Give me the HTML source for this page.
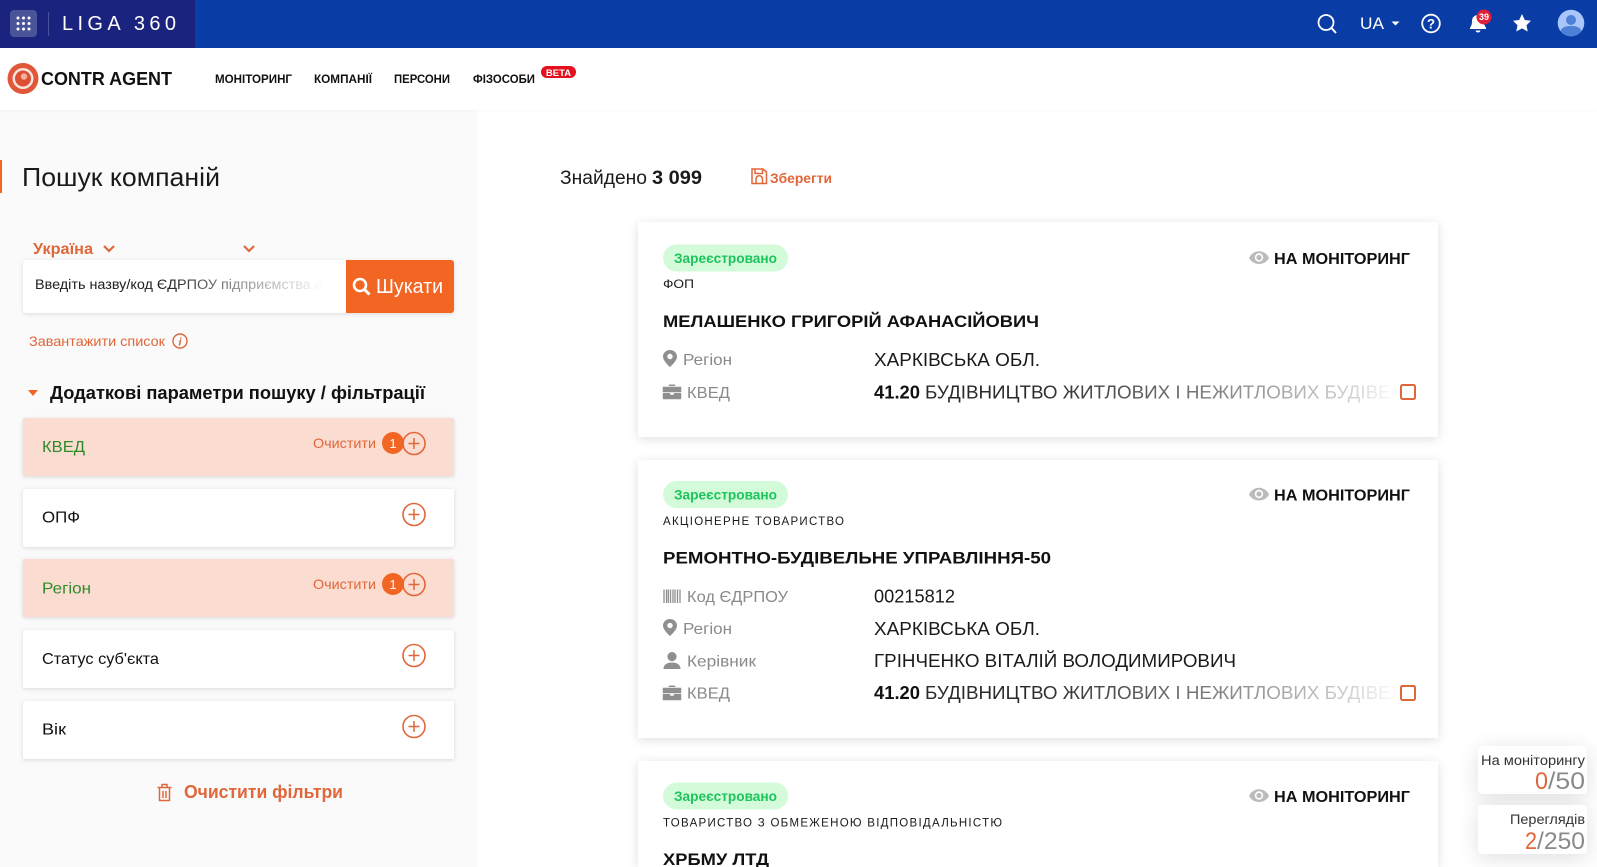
<!DOCTYPE html>
<html lang="uk"><head><meta charset="utf-8"><title>Contr Agent</title>
<style>
html,body{margin:0;padding:0;width:1597px;height:867px;overflow:hidden;background:#fff}
body{position:relative}
.b{position:absolute;box-sizing:border-box}
.card{left:638px;width:800px;background:#fff;box-shadow:0 2px 10px rgba(0,0,0,.13)}
.f{left:22.500px;width:431.500px;height:58px;border-radius:2px;background:#fff;box-shadow:0 1px 4px rgba(0,0,0,.14)}
.p{background:#fbdcd0}
.w{left:1478px;width:109px;background:#fff;border-radius:4px;box-shadow:0 4px 22px rgba(0,0,0,.13)}
svg{position:absolute;left:0;top:0}
text{font-family:"Liberation Sans","DejaVu Sans",sans-serif;fill:#1a1a1a}
.o{fill:#e0673a}
.g{fill:#8a8a8a}
.sb{font-weight:700}
</style></head><body>
<div class="b" style="left:0;top:110px;width:478px;height:757px;background:#fafafa"></div>
<div class="b" style="left:0;top:48px;width:1597px;height:62px;background:#fff;box-shadow:0 1px 2px rgba(0,0,0,.03)"></div>
<div class="b" style="left:0;top:0;width:1597px;height:48px;background:#0a3ca5"></div>
<div class="b" style="left:0;top:0;width:195px;height:48px;background:#1a237e"></div>
<div class="b" style="left:10px;top:10px;width:27px;height:27px;border-radius:4px;background:#4a5499"></div>
<div class="b" style="left:48px;top:12px;width:1px;height:24px;background:#4a5499"></div>
<div class="b" style="left:0;top:160px;width:2px;height:33px;background:#f26522"></div>
<div class="b" style="left:22.500px;top:260px;width:431.500px;height:53px;background:#fff;border-radius:3px;box-shadow:0 1px 4px rgba(0,0,0,.13)"></div>
<div class="b" style="left:346px;top:260px;width:108px;height:53px;background:#f26522;border-radius:0 3px 3px 0"></div>
<div class="b f p" style="top:418px"></div>
<div class="b f" style="top:489px"></div>
<div class="b f p" style="top:559px"></div>
<div class="b f" style="top:630px"></div>
<div class="b f" style="top:700.500px"></div>
<div class="b card" style="top:222px;height:215px"></div>
<div class="b card" style="top:459.500px;height:278px"></div>
<div class="b card" style="top:761px;height:106px"></div>
<div class="b w" style="top:746px;height:48px"></div>
<div class="b w" style="top:805px;height:49px"></div>

<svg width="1597" height="867" viewBox="0 0 1597 867" xmlns="http://www.w3.org/2000/svg">
<defs>
<linearGradient id="fd" gradientUnits="userSpaceOnUse" x1="1030" y1="0" x2="1400" y2="0"><stop offset="0" stop-color="#2a2a2a"/><stop offset=".45" stop-color="#777"/><stop offset=".85" stop-color="#ccc"/><stop offset="1" stop-color="#fff"/></linearGradient>
<linearGradient id="ph" gradientUnits="userSpaceOnUse" x1="165" y1="0" x2="325" y2="0"><stop offset="0" stop-color="#222"/><stop offset=".5" stop-color="#999"/><stop offset=".85" stop-color="#ddd"/><stop offset="1" stop-color="#fff"/></linearGradient>
<g id="plus"><circle r="11" fill="none" stroke="#e0673a" stroke-width="1.600"/><path d="M-5.500 0H5.500M0-5.500V5.500" stroke="#e0673a" stroke-width="1.500"/></g>
<g id="eye"><path d="M0 8C4-1 16-1 20 8C16 16 4 16 0 8Z" fill="#bbb"/><circle cx="10" cy="7.500" r="4.200" fill="#fff"/><circle cx="10" cy="7.500" r="2.600" fill="#bbb"/></g>
<path id="pin" d="M7 0C3 0 0 3 0 6.600C0 11 7 17 7 17S14 11 14 6.600C14 3 11 0 7 0ZM7 9.200A2.700 2.700 0 1 1 7 3.800A2.700 2.700 0 0 1 7 9.200Z" fill="#8f8f8f" fill-rule="evenodd"/>
<g id="case"><path d="M6 2V0.800H12V2M0 3H18V8H0ZM0 9.300H7V11H11V9.300H18V15H0Z" fill="#8f8f8f" stroke="#8f8f8f" stroke-width=".5"/></g>
</defs>

<!-- top bar -->
<g fill="#fff"><circle cx="18" cy="18" r="1.500"/><circle cx="23.500" cy="18" r="1.500"/><circle cx="29" cy="18" r="1.500"/><circle cx="18" cy="23.500" r="1.500"/><circle cx="23.500" cy="23.500" r="1.500"/><circle cx="29" cy="23.500" r="1.500"/><circle cx="18" cy="29" r="1.500"/><circle cx="23.500" cy="29" r="1.500"/><circle cx="29" cy="29" r="1.500"/></g>
<text x="62" y="30" font-size="20" textLength="114" lengthAdjust="spacing" style="fill:#fff">LIGA 360</text>
<circle cx="1326" cy="22.500" r="7.500" fill="none" stroke="#fff" stroke-width="1.800"/><path d="M1331.500 28L1336 33" stroke="#fff" stroke-width="2"/>
<text x="1360" y="29" font-size="16.500" textLength="24" lengthAdjust="spacingAndGlyphs" style="fill:#fff">UA</text>
<path d="M1391.500 21.500H1399.500L1395.500 25.500Z" fill="#fff"/>
<circle cx="1431" cy="23.500" r="8.800" fill="none" stroke="#fff" stroke-width="1.800"/>
<text x="1431" y="28.500" font-size="13.500" text-anchor="middle" font-weight="700" style="fill:#fff">?</text>
<path d="M1478 15C1474 15 1472 18 1472 21C1472 25 1471 26 1470 28V29H1486V28C1485 26 1484 25 1484 21C1484 18 1482 15 1478 15ZM1475.500 30.500C1476 32 1477 32.500 1478 32.500S1480 32 1480.500 30.500Z" fill="#fff"/>
<circle cx="1484" cy="17" r="7.500" fill="#e01e37"/>
<text x="1484" y="20" font-size="9" text-anchor="middle" font-weight="700" style="fill:#fff">39</text>
<path d="M1522 14L1524.800 20L1531 20.800L1526.500 25.200L1527.700 31.500L1522 28.400L1516.300 31.500L1517.500 25.200L1513 20.800L1519.200 20Z" fill="#fff"/>
<circle cx="1571" cy="23" r="13.300" fill="#a8c6fa"/><circle cx="1571" cy="20" r="5" fill="#4e80d8"/><path d="M1560.500 31C1562 27 1566 26 1571 26S1580 27 1581.500 31C1579 34.500 1575 36.300 1571 36.300S1563 34.500 1560.500 31Z" fill="#4e80d8"/>

<!-- nav -->
<circle cx="23" cy="78.500" r="15.500" fill="#e0573a"/><circle cx="23" cy="78.500" r="10.500" fill="#f9e3dc"/><circle cx="23" cy="78.500" r="8" fill="#dc4f33"/><circle cx="24" cy="76.500" r="3.200" fill="#f3b09c"/>
<text x="41" y="85" font-size="18.500" font-weight="700" textLength="131" lengthAdjust="spacingAndGlyphs" style="fill:#111">CONTR AGENT</text>
<text x="215" y="83" textLength="77" lengthAdjust="spacingAndGlyphs" font-size="12" font-weight="700" style="fill:#111">МОНІТОРИНГ</text>
<text x="314" y="83" textLength="58" lengthAdjust="spacingAndGlyphs" font-size="12" font-weight="700" style="fill:#111">КОМПАНІЇ</text>
<text x="394" y="83" textLength="56" lengthAdjust="spacingAndGlyphs" font-size="12" font-weight="700" style="fill:#111">ПЕРСОНИ</text>
<text x="473" y="83" textLength="62" lengthAdjust="spacingAndGlyphs" font-size="12" font-weight="700" style="fill:#111">ФІЗОСОБИ</text>
<rect x="541" y="66" width="35" height="12" rx="6" fill="#e3101e"/>
<text x="558.500" y="76" font-size="9.500" font-weight="700" text-anchor="middle" style="fill:#fff">BETA</text>

<!-- sidebar -->
<text x="22" y="186" font-size="26" textLength="198" lengthAdjust="spacingAndGlyphs">Пошук компаній</text>
<text x="33" y="254" class="o sb" font-size="16" textLength="60" lengthAdjust="spacingAndGlyphs">Україна</text>
<path d="M104 246L109 251L114 246M244 246L249 251L254 246" fill="none" stroke="#e0673a" stroke-width="2.200"/>
<text x="35" y="289" font-size="13.500" textLength="304" lengthAdjust="spacingAndGlyphs" style="fill:url(#ph)">Введіть назву/код ЄДРПОУ підприємства або</text>
<circle cx="360" cy="285" r="6" fill="none" stroke="#fff" stroke-width="2.600"/><path d="M364.500 289.500L369.500 294.500" stroke="#fff" stroke-width="3"/>
<text x="376" y="293" font-size="20" textLength="67" lengthAdjust="spacingAndGlyphs" style="fill:#fff">Шукати</text>
<text x="29" y="346" class="o" font-size="14" textLength="136" lengthAdjust="spacingAndGlyphs">Завантажити список</text>
<circle cx="180" cy="341" r="7" fill="none" stroke="#e0673a" stroke-width="1.400"/>
<text x="180" y="345.500" class="o" font-size="11" font-weight="700" font-style="italic" text-anchor="middle">i</text>
<path d="M28 390H38L33 396Z" fill="#f26522"/>
<text x="50" y="399" class="sb" font-size="18" textLength="375" lengthAdjust="spacingAndGlyphs" style="fill:#111">Додаткові параметри пошуку / фільтрації</text>

<text x="42" y="452" font-size="16" textLength="43" lengthAdjust="spacingAndGlyphs" style="fill:#2f8b2a">КВЕД</text>
<text x="313" y="448" class="o" font-size="14" textLength="63" lengthAdjust="spacingAndGlyphs">Очистити</text>
<circle cx="393" cy="443" r="11" fill="#f26522"/><text x="393" y="448" font-size="13" text-anchor="middle" style="fill:#fff">1</text>
<use href="#plus" x="414" y="443.500"/>

<text x="42" y="522.500" font-size="16" textLength="38" lengthAdjust="spacingAndGlyphs" style="fill:#111">ОПФ</text>
<use href="#plus" x="414" y="514.500"/>

<text x="42" y="593.500" font-size="16" textLength="49" lengthAdjust="spacingAndGlyphs" style="fill:#2f8b2a">Регіон</text>
<text x="313" y="589" class="o" font-size="14" textLength="63" lengthAdjust="spacingAndGlyphs">Очистити</text>
<circle cx="393" cy="584" r="11" fill="#f26522"/><text x="393" y="589" font-size="13" text-anchor="middle" style="fill:#fff">1</text>
<use href="#plus" x="414" y="584.500"/>

<text x="42" y="664" font-size="16" textLength="117" lengthAdjust="spacingAndGlyphs" style="fill:#111">Статус суб'єкта</text>
<use href="#plus" x="414" y="655.500"/>
<text x="42" y="734.500" font-size="16" textLength="24" lengthAdjust="spacingAndGlyphs" style="fill:#111">Вік</text>
<use href="#plus" x="414" y="726.500"/>

<path d="M157.500 787.500H171.500M162 787V784.500H167V787M159.500 788V800.500H169.500V788M163 791V798M166 791V798" fill="none" stroke="#e0673a" stroke-width="1.500"/>
<text x="184" y="798" class="o sb" font-size="18" textLength="159" lengthAdjust="spacingAndGlyphs">Очистити фільтри</text>

<!-- main header -->
<text x="560" y="184" font-size="19" textLength="87" lengthAdjust="spacingAndGlyphs">Знайдено</text>
<text x="652" y="184" font-size="19" font-weight="700" textLength="50" lengthAdjust="spacingAndGlyphs">3 099</text>
<path d="M752 169H763L766.500 172V183.500H752ZM755 169V173.500H762.500V169M756 183V179A3.200 3.200 0 0 1 762.500 179V183" fill="none" stroke="#e0673a" stroke-width="1.500"/>
<text x="770" y="183" class="o sb" font-size="13.500" textLength="62" lengthAdjust="spacingAndGlyphs">Зберегти</text>

<!-- card 1 -->
<rect x="663" y="244.500" width="125" height="27" rx="13.500" fill="#d3fbd9"/>
<text x="674" y="263" font-size="13.500" font-weight="700" textLength="103" lengthAdjust="spacingAndGlyphs" style="fill:#1cc45c">Зареєстровано</text>
<use href="#eye" x="1249" y="250"/>
<text x="1274" y="264" font-size="16" font-weight="700" textLength="136" lengthAdjust="spacingAndGlyphs" style="fill:#111">НА МОНІТОРИНГ</text>
<text x="663" y="288" font-size="11.500" textLength="31" lengthAdjust="spacingAndGlyphs">ФОП</text>
<text x="663" y="327" font-size="17" font-weight="700" textLength="376" lengthAdjust="spacingAndGlyphs" style="fill:#111">МЕЛАШЕНКО ГРИГОРІЙ АФАНАСІЙОВИЧ</text>
<use href="#pin" x="663" y="350"/>
<text x="683" y="365" class="g" font-size="16" textLength="49" lengthAdjust="spacingAndGlyphs">Регіон</text>
<text x="874" y="366" font-size="18" textLength="166" lengthAdjust="spacingAndGlyphs">ХАРКІВСЬКА ОБЛ.</text>
<use href="#case" x="663" y="384"/>
<text x="687" y="398" class="g" font-size="16" textLength="43" lengthAdjust="spacingAndGlyphs">КВЕД</text>
<text x="874" y="398.500" font-size="18" font-weight="700" textLength="46" lengthAdjust="spacingAndGlyphs" style="fill:#111">41.20</text>
<text x="925" y="398.500" font-size="18" textLength="478" lengthAdjust="spacingAndGlyphs" style="fill:url(#fd)">БУДІВНИЦТВО ЖИТЛОВИХ І НЕЖИТЛОВИХ БУДІВЕЛ</text>
<rect x="1401" y="385" width="14" height="14" rx="1.500" fill="none" stroke="#e0673a" stroke-width="2"/>

<!-- card 2 -->
<rect x="663" y="481" width="125" height="27" rx="13.500" fill="#d3fbd9"/>
<text x="674" y="499.500" font-size="13.500" font-weight="700" textLength="103" lengthAdjust="spacingAndGlyphs" style="fill:#1cc45c">Зареєстровано</text>
<use href="#eye" x="1249" y="486.500"/>
<text x="1274" y="500.500" font-size="16" font-weight="700" textLength="136" lengthAdjust="spacingAndGlyphs" style="fill:#111">НА МОНІТОРИНГ</text>
<text x="663" y="525" font-size="11.500" textLength="181" lengthAdjust="spacing">АКЦІОНЕРНЕ ТОВАРИСТВО</text>
<text x="663" y="563.500" font-size="17" font-weight="700" textLength="388" lengthAdjust="spacingAndGlyphs" style="fill:#111">РЕМОНТНО-БУДІВЕЛЬНЕ УПРАВЛІННЯ-50</text>
<path d="M664 589.500V603M666.500 589.500V603M668.300 589.500V603M670.500 589.500V603M673 589.500V603M675 589.500V603M677.500 589.500V603M680 589.500V603" stroke="#8f8f8f" stroke-width="1.300"/>
<text x="687" y="602" class="g" font-size="16" textLength="101" lengthAdjust="spacingAndGlyphs">Код ЄДРПОУ</text>
<text x="874" y="602.500" font-size="18" textLength="81" lengthAdjust="spacingAndGlyphs">00215812</text>
<use href="#pin" x="663" y="619"/>
<text x="683" y="634" class="g" font-size="16" textLength="49" lengthAdjust="spacingAndGlyphs">Регіон</text>
<text x="874" y="635" font-size="18" textLength="166" lengthAdjust="spacingAndGlyphs">ХАРКІВСЬКА ОБЛ.</text>
<path d="M672 652A4.600 4.600 0 1 1 672 661.200A4.600 4.600 0 0 1 672 652ZM663.500 669C663.500 664.500 667 662.500 672 662.500S680.500 664.500 680.500 669Z" fill="#8f8f8f"/>
<text x="687" y="666.500" class="g" font-size="16" textLength="69" lengthAdjust="spacingAndGlyphs">Керівник</text>
<text x="874" y="667" font-size="18" textLength="362" lengthAdjust="spacingAndGlyphs">ГРІНЧЕНКО ВІТАЛІЙ ВОЛОДИМИРОВИЧ</text>
<use href="#case" x="663" y="685"/>
<text x="687" y="698.500" class="g" font-size="16" textLength="43" lengthAdjust="spacingAndGlyphs">КВЕД</text>
<text x="874" y="699" font-size="18" font-weight="700" textLength="46" lengthAdjust="spacingAndGlyphs" style="fill:#111">41.20</text>
<text x="925" y="699" font-size="18" textLength="478" lengthAdjust="spacingAndGlyphs" style="fill:url(#fd)">БУДІВНИЦТВО ЖИТЛОВИХ І НЕЖИТЛОВИХ БУДІВЕЛ</text>
<rect x="1401" y="686" width="14" height="14" rx="1.500" fill="none" stroke="#e0673a" stroke-width="2"/>

<!-- card 3 -->
<rect x="663" y="782.500" width="125" height="27" rx="13.500" fill="#d3fbd9"/>
<text x="674" y="801" font-size="13.500" font-weight="700" textLength="103" lengthAdjust="spacingAndGlyphs" style="fill:#1cc45c">Зареєстровано</text>
<use href="#eye" x="1249" y="788"/>
<text x="1274" y="802" font-size="16" font-weight="700" textLength="136" lengthAdjust="spacingAndGlyphs" style="fill:#111">НА МОНІТОРИНГ</text>
<text x="663" y="826.500" font-size="11.500" textLength="339" lengthAdjust="spacing">ТОВАРИСТВО З ОБМЕЖЕНОЮ ВІДПОВІДАЛЬНІСТЮ</text>
<text x="663" y="865" font-size="17" font-weight="700" textLength="106" lengthAdjust="spacingAndGlyphs" style="fill:#111">ХРБМУ ЛТД</text>

<!-- widgets -->
<text x="1481" y="765" font-size="13.500" textLength="104" lengthAdjust="spacingAndGlyphs" style="fill:#333">На моніторингу</text>
<text x="1535" y="789" class="o" font-size="24" textLength="13" lengthAdjust="spacingAndGlyphs">0</text>
<text x="1548" y="789" class="g" font-size="24" textLength="37" lengthAdjust="spacingAndGlyphs">/50</text>
<text x="1510" y="824" font-size="13.500" textLength="75" lengthAdjust="spacingAndGlyphs" style="fill:#333">Переглядів</text>
<text x="1525" y="849" class="o" font-size="24" textLength="12" lengthAdjust="spacingAndGlyphs">2</text>
<text x="1537" y="849" class="g" font-size="24" textLength="48" lengthAdjust="spacingAndGlyphs">/250</text>
</svg>
</body></html>
